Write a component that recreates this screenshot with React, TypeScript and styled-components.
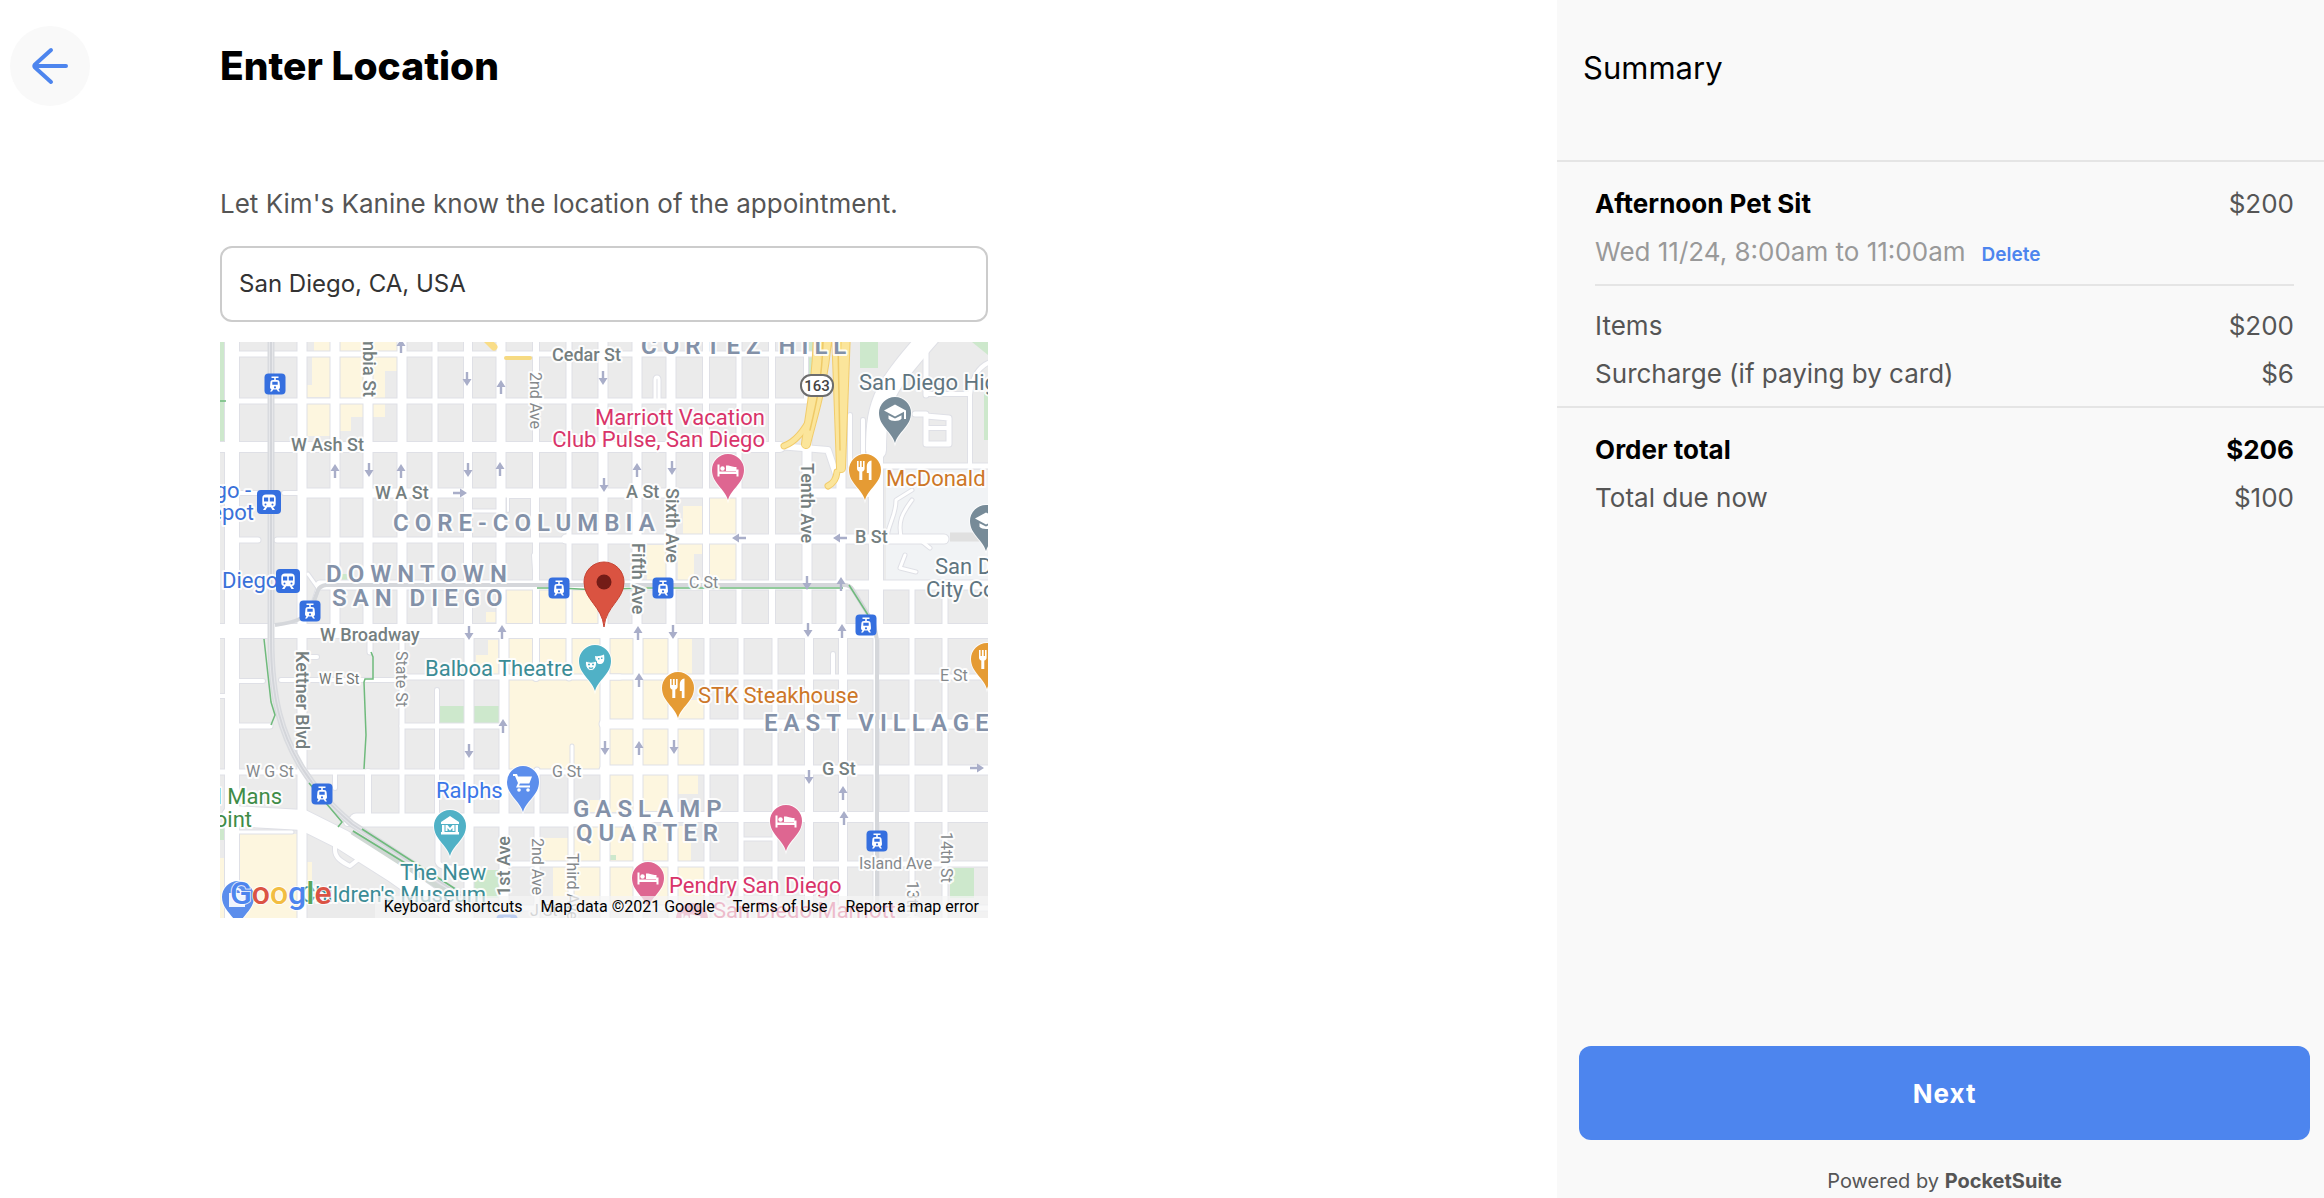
import React from "react";
import styled, { createGlobalStyle } from "styled-components";

const BLUE = "#4d85ee";
const MAP_FONT = 'Roboto, "Liberation Sans", sans-serif';

const GlobalStyle = createGlobalStyle`
  *, *::before, *::after { box-sizing: border-box; }
  body {
    margin: 0;
    background: #fff;
    font-family: Inter, "Liberation Sans", sans-serif;
    color: #555;
  }
  h1, h2, p { margin: 0; }
`;

const Page = styled.div`
  display: flex;
  min-height: 100vh;
`;

const Main = styled.main`
  flex: 1;
  min-width: 0;
  display: flex;
  align-items: flex-start;
  padding: 26px 10px;
`;

const BackButton = styled.button`
  flex: none;
  display: grid;
  place-items: center;
  width: 80px;
  height: 80px;
  border: 0;
  border-radius: 50%;
  padding: 0;
  background: #f9f9f9;
  cursor: pointer;
`;

const Content = styled.div`
  flex: 1;
  min-width: 0;
  max-width: 768px;
  margin-left: 130px;
`;

const Title = styled.h1`
  font-size: 39px;
  line-height: 80px;
  font-weight: 800;
  color: #000;
`;

const FieldLabel = styled.label`
  display: block;
  margin-top: 74px;
  font-size: 26px;
  line-height: 48px;
`;

const LocationInput = styled.input`
  display: block;
  width: 100%;
  height: 76px;
  margin-top: 18px;
  padding: 0 17px 2px;
  border: 2px solid #ccc;
  border-radius: 12px;
  background: #fff;
  font: inherit;
  font-size: 24px;
  color: #333;
`;

const MapFrame = styled.div`
  position: relative;
  margin-top: 20px;
  overflow: hidden;
`;

const MapDrawing = styled.svg`
  display: block;
  width: 100%;
  height: auto;
  font-family: ${MAP_FONT};
`;

const MapFooter = styled.div`
  position: absolute;
  right: 0;
  bottom: 0;
  display: flex;
  gap: 18px;
  padding: 0 9px;
  background: rgba(245, 245, 245, 0.7);
  font-family: ${MAP_FONT};
  font-size: 16px;
  line-height: 22px;
  color: #000;
  white-space: nowrap;
`;

const MapFooterButton = styled.button`
  padding: 0;
  border: 0;
  background: none;
  font: inherit;
  color: inherit;
  cursor: pointer;
`;

const MapFooterLink = styled.a`
  color: inherit;
  text-decoration: none;
`;

const Sidebar = styled.aside`
  flex: none;
  width: 33%;
  display: flex;
  flex-direction: column;
  background: #f9f9f9;
`;

const SidebarHeader = styled.header`
  padding: 38px 26px 62px;
  border-bottom: 2px solid #e5e5e5;
`;

const SidebarTitle = styled.h2`
  font-size: 31px;
  line-height: 60px;
  font-weight: 400;
  color: #000;
`;

const Section = styled.section<{ $ruled?: boolean }>`
  padding: 18px 30px 8px 38px;
  border-bottom: ${(p) => (p.$ruled ? "2px solid #e5e5e5" : "0")};
`;

const Item = styled.div`
  padding-bottom: 8px;
  margin-bottom: 16px;
  border-bottom: 2px solid #e5e5e5;
`;

const Row = styled.div<{ $strong?: boolean }>`
  display: flex;
  justify-content: space-between;
  font-size: 26px;
  line-height: 48px;
  font-weight: ${(p) => (p.$strong ? 700 : 400)};
  color: ${(p) => (p.$strong ? "#000" : "#555")};
`;

const ItemName = styled.span`
  font-weight: 700;
  color: #000;
`;

const ItemTime = styled.div`
  display: flex;
  align-items: baseline;
  gap: 16px;
  font-size: 26px;
  line-height: 48px;
  color: #999;
`;

const DeleteButton = styled.button`
  padding: 0;
  border: 0;
  background: none;
  font: inherit;
  font-size: 19px;
  line-height: 24px;
  font-weight: 600;
  color: ${BLUE};
  cursor: pointer;
`;

const SidebarFooter = styled.footer`
  margin-top: auto;
  padding: 0 14px 0 22px;
  text-align: center;
`;

const NextButton = styled.button`
  display: block;
  width: 100%;
  height: 94px;
  border: 0;
  border-radius: 12px;
  background: ${BLUE};
  font: inherit;
  font-size: 26px;
  font-weight: 700;
  letter-spacing: 1px;
  color: #fff;
  cursor: pointer;
`;

const PoweredBy = styled.p`
  padding-top: 24px;
  font-size: 20px;
  line-height: 34px;
`;

/* ---------- map data: [position, width, from, to] ---------- */

type Street = [number, number, number, number];

const avenues: Street[] = [
  [232, 14, 330, 930], [302, 9, 330, 930], [335, 9, 330, 632], [335, 4, 772, 788],
  [368, 9, 330, 632], [370, 5, 632, 652], [368, 6, 772, 818], [402, 9, 330, 632],
  [402, 5, 632, 818], [435, 5, 330, 632], [437, 4, 690, 818], [468, 8, 330, 632],
  [469, 9, 632, 930], [501, 9, 330, 632], [504, 9, 632, 930], [536, 6, 330, 678],
  [537, 5, 770, 930], [569, 5, 330, 678], [572, 3, 746, 770], [571, 5, 770, 930],
  [603, 9, 330, 632], [605, 9, 632, 930], [637, 9, 330, 632], [638, 9, 632, 930],
  [671, 9, 330, 632], [673, 9, 632, 930], [706, 6, 330, 632], [707, 5, 632, 930],
  [739, 5, 330, 632], [741, 5, 632, 930], [772, 6, 330, 632], [775, 5, 632, 930],
  [807, 9, 440, 632], [809, 8, 632, 930], [841, 9, 470, 632], [843, 8, 632, 930],
  [876, 14, 440, 630], [876, 5, 630, 930], [912, 5, 584, 930], [945, 5, 584, 930],
  [833, 4, 654, 676], [850, 4, 415, 466], [863, 4, 420, 466],
];

const crossStreets: Street[] = [
  [354, 5, 232, 812], [401, 5, 232, 806], [447, 10, 210, 780], [493, 9, 302, 866],
  [493, 4, 236, 260], [493, 4, 284, 302], [540, 5, 236, 258], [540, 5, 277, 570],
  [539, 9, 566, 944], [585, 9, 320, 1000], [631, 14, 210, 1000], [681, 4, 236, 263],
  [680, 4, 281, 402], [677, 5, 402, 504], [677, 5, 504, 620], [677, 5, 604, 1000],
  [726, 5, 402, 504], [724, 9, 604, 1000], [726, 5, 236, 270], [772, 5, 210, 604],
  [770, 9, 604, 1000], [820, 13, 356, 640], [817, 10, 630, 1000], [864, 5, 504, 1000],
  [908, 5, 504, 1000], [466, 5, 876, 1000], [832, 3, 236, 292], [657, 4, 302, 317],
  [839, 3, 741, 775], [696, 4, 210, 232],
];

const yellowBlocks: number[][] = [
  [314, 342, 16, 10], [340, 342, 57, 10], [312, 357, 18, 28], [307, 385, 23, 12],
  [340, 357, 45, 42], [340, 357, 57, 14], [306, 404, 24, 32], [340, 404, 23, 13],
  [340, 404, 11, 27], [373, 404, 12, 13], [507, 590, 26, 36], [539, 587, 29, 40],
  [573, 587, 30, 40], [647, 545, 20, 36], [678, 544, 16, 36], [694, 544, 9, 10],
  [683, 506, 20, 30], [709, 496, 28, 40], [709, 544, 28, 36], [476, 655, 22, 20],
  [509, 638, 94, 132], [610, 638, 24, 38], [643, 638, 25, 38], [678, 638, 14, 38],
  [610, 680, 24, 40], [643, 680, 25, 40], [678, 700, 26, 20], [610, 728, 24, 38],
  [643, 728, 25, 38], [678, 728, 26, 38], [610, 774, 24, 38], [643, 774, 25, 38],
  [678, 774, 20, 20], [541, 838, 27, 24], [574, 826, 28, 36], [609, 826, 26, 36],
  [643, 826, 26, 36], [678, 826, 13, 36], [553, 867, 50, 40], [609, 867, 26, 40],
  [643, 867, 26, 40], [678, 867, 26, 40], [239, 834, 59, 90], [220, 858, 6, 60],
  [303, 862, 9, 36], [590, 800, 12, 12], [488, 640, 10, 16], [486, 612, 11, 10],
];

const parks: number[][] = [
  [220, 342, 6, 100], [809, 342, 14, 32], [860, 342, 18, 26], [984, 392, 6, 48],
  [440, 706, 60, 17], [220, 828, 6, 12], [472, 870, 27, 28], [950, 868, 24, 30],
  [342, 574, 5, 6], [609, 855, 7, 5],
];

const arrows: [number, number, number][] = [
  [401, 346, 0], [467, 379, 180], [335, 471, 0], [369, 470, 180], [401, 471, 0],
  [468, 470, 180], [460, 493, 90], [501, 387, 0], [603, 378, 180], [500, 469, 0],
  [604, 485, 180], [637, 470, 0], [672, 468, 180], [739, 538, 270], [840, 538, 270],
  [807, 583, 180], [841, 584, 0], [469, 633, 180], [469, 751, 180], [502, 632, 0],
  [638, 633, 0], [673, 632, 180], [639, 680, 0], [503, 726, 0], [605, 748, 180],
  [639, 748, 0], [674, 747, 180], [808, 630, 180], [842, 631, 0], [977, 768, 90],
  [809, 777, 180], [843, 793, 0], [844, 818, 0],
];

type LabelKind = "street" | "minor" | "district" | "poi";
interface LabelSpec {
  t: string; x: number; y: number; kind: LabelKind;
  color?: string; r?: number; end?: boolean; size?: number;
}

const PINK = "#d9346a";
const TEAL = "#3b8c96";
const ORANGE = "#cd7728";
const SLATE = "#607580";
const TRANSIT = "#3a71d9";

const labels: LabelSpec[] = [
  { t: "W Ash St", x: 291, y: 451, kind: "street" },
  { t: "W A St", x: 375, y: 499, kind: "street" },
  { t: "Cedar St", x: 552, y: 361, kind: "street" },
  { t: "A St", x: 626, y: 498, kind: "street" },
  { t: "B St", x: 855, y: 543, kind: "street" },
  { t: "W Broadway", x: 320, y: 641, kind: "street" },
  { t: "G St", x: 822, y: 775, kind: "street" },
  { t: "mbia St", x: 363, y: 397, kind: "street", r: 90, end: true },
  { t: "Sixth Ave", x: 666, y: 488, kind: "street", r: 90 },
  { t: "Fifth Ave", x: 632, y: 543, kind: "street", r: 90 },
  { t: "Tenth Ave", x: 801, y: 463, kind: "street", r: 90 },
  { t: "Kettner Blvd", x: 296, y: 651, kind: "street", r: 90 },
  { t: "1st Ave", x: 510, y: 896, kind: "street", r: -90 },
  { t: "C St", x: 689, y: 588, kind: "minor" },
  { t: "W E St", x: 319, y: 684, kind: "minor", size: 14, color: "#6f7472" },
  { t: "W G St", x: 246, y: 777, kind: "minor" },
  { t: "G St", x: 552, y: 777, kind: "minor" },
  { t: "E St", x: 940, y: 681, kind: "minor" },
  { t: "Island Ave", x: 859, y: 869, kind: "minor" },
  { t: "J St", x: 530, y: 916, kind: "minor" },
  { t: "2nd Ave", x: 530, y: 372, kind: "minor", r: 90 },
  { t: "State St", x: 396, y: 651, kind: "minor", r: 90 },
  { t: "2nd Ave", x: 532, y: 838, kind: "minor", r: 90 },
  { t: "Third Ave", x: 567, y: 853, kind: "minor", r: 90 },
  { t: "14th St", x: 941, y: 832, kind: "minor", r: 90 },
  { t: "13th St", x: 907, y: 881, kind: "minor", r: 90 },
  { t: "CORTEZ HILL", x: 641, y: 354, kind: "district" },
  { t: "CORE-COLUMBIA", x: 393, y: 531, kind: "district" },
  { t: "DOWNTOWN", x: 326, y: 582, kind: "district" },
  { t: "SAN DIEGO", x: 332, y: 606, kind: "district" },
  { t: "GASLAMP", x: 573, y: 817, kind: "district" },
  { t: "QUARTER", x: 576, y: 841, kind: "district" },
  { t: "EAST VILLAGE", x: 764, y: 731, kind: "district" },
  { t: "Marriott Vacation", x: 765, y: 425, kind: "poi", color: PINK, end: true },
  { t: "Club Pulse, San Diego", x: 765, y: 447, kind: "poi", color: PINK, end: true },
  { t: "Diego", x: 222, y: 588, kind: "poi", color: TRANSIT },
  { t: "go -", x: 251, y: 498, kind: "poi", color: TRANSIT, end: true },
  { t: "epot", x: 254, y: 520, kind: "poi", color: TRANSIT, end: true },
  { t: "San Diego Hig", x: 859, y: 390, kind: "poi", color: SLATE },
  { t: "McDonald", x: 886, y: 486, kind: "poi", color: ORANGE },
  { t: "San D", x: 935, y: 574, kind: "poi", color: SLATE },
  { t: "City Co", x: 926, y: 597, kind: "poi", color: SLATE },
  { t: "Balboa Theatre", x: 425, y: 676, kind: "poi", color: TEAL },
  { t: "STK Steakhouse", x: 698, y: 703, kind: "poi", color: ORANGE },
  { t: "Ralphs", x: 436, y: 798, kind: "poi", color: "#3a76e8" },
  { t: "l Mans", x: 282, y: 804, kind: "poi", color: "#3f8c47", end: true },
  { t: "oint", x: 252, y: 827, kind: "poi", color: "#3f8c47", end: true },
  { t: "The New", x: 400, y: 880, kind: "poi", color: TEAL },
  { t: "Children's Museum", x: 486, y: 902, kind: "poi", color: TEAL, end: true },
  { t: "Pendry San Diego", x: 669, y: 893, kind: "poi", color: PINK },
  { t: "San Diego Marriott", x: 713, y: 918, kind: "poi", color: PINK },
];

const labelStyle: Record<LabelKind, { size: number; weight: number; color: string; spacing: number }> = {
  street: { size: 18, weight: 500, color: "#757f80", spacing: 0 },
  minor: { size: 16, weight: 400, color: "#85898c", spacing: 0 },
  district: { size: 24, weight: 600, color: "#8391a8", spacing: 6 },
  poi: { size: 22, weight: 400, color: "#333", spacing: 0 },
};

function MapLabel({ t, x, y, kind, color, r, end, size }: LabelSpec) {
  const s = labelStyle[kind];
  return (
    <text
      transform={`translate(${x} ${y}) rotate(${r ?? 0})`}
      fontSize={size ?? s.size}
      fontWeight={s.weight}
      letterSpacing={s.spacing}
      fill={color ?? s.color}
      textAnchor={end ? "end" : "start"}
      stroke="#fff"
      strokeWidth={4}
      strokeLinejoin="round"
      strokeOpacity={0.9}
      paintOrder="stroke"
    >
      {t}
    </text>
  );
}

/* Glyphs are drawn round the centre of the pin head. */
const glyphs: Record<string, React.ReactNode> = {
  bed: (
    <g fill="#fff">
      <path d="M-10.500-5.500h2v7h16.500v-2h2.500v7h-2v-2.500h-17v2.500h-2z" />
      <circle cx="-5.500" cy="-1.500" r="2.200" />
      <path d="M-2-4.500c4-.5 5 1.500 10.500 1.500v4H-2z" />
    </g>
  ),
  fork: (
    <g fill="#fff">
      <path d="M-8-9h1.600v6h1.300v-6h1.800v6h1.300v-6H-.4v7.500c0 1.800-1 2.700-2.300 3V10h-3V1.500c-1.300-.3-2.300-1.200-2.300-3z" />
      <path d="M6.500-9.500V10H3.800V3H1.800v-7c0-3 2-5.200 4.700-5.500z" />
    </g>
  ),
  school: (
    <g fill="#fff">
      <path d="M0-8.500 11-2.500V6H9V-1.300L0 3.500-11-2.500z" />
      <path d="M-6.500 2.200 0 5.600 6.500 2.200v3.600C4 8.800-4 8.800-6.500 5.800z" />
    </g>
  ),
  masks: (
    <g>
      <path fill="#fff" d="M0-5c3 .5 6 0 9-1.500.8 5 .5 9-3.500 9.500C2 3.500.5 0 0-5z" />
      <path fill="#fff" stroke="#50b1c6" d="M-9.500 0c4 1.500 7 1.500 11 0C2 6-.5 9.500-4 9.500S-10 6-9.500 0z" />
      <path stroke="#50b1c6" strokeWidth="1.400" fill="none" d="M-7 3.500h2M-3 3.500h2M-6 6.500c1 1.200 3 1.200 4 0M3-2.200h1.500M6-2.800h1.500" />
    </g>
  ),
  cart: (
    <g fill="#fff">
      <path d="M-10-8h4l1 2.500H9L6.300 1.500H-3L-4 3.500H7v2H-7L-5 1-8-6h-2z" />
      <circle cx="-4" cy="8" r="1.800" />
      <circle cx="5" cy="8" r="1.800" />
    </g>
  ),
  museum: (
    <path fill="#fff" d="M0-10 9-4v2H-9v-2zM-8-1h2.500v7H-8zM5.500-1H8v7H5.500zM-9 6H9v2.500H-9zM-4.500 5v-6h2L0 2l2.500-3h2v6h-2V2L0 4.800-2.500 2v3z" />
  ),
  bag: <path fill="#fff" fillOpacity="0.9" d="M-9-4h3c0-7 10-7 10 0h3V10H-9zM-4-4h6c0-4-6-4-6 0z" />,
};

function Pin({ x, y, color, glyph }: { x: number; y: number; color: string; glyph: string }) {
  return (
    <g transform={`translate(${x} ${y})`}>
      <path
        d="M0 0C-3-11-16-17-16-30a16 16 0 0 1 32 0C16-17 3-11 0 0z"
        fill={color}
        stroke="#fff"
        strokeWidth="2"
        strokeOpacity="0.7"
        paintOrder="stroke"
      />
      <g transform="translate(0 -30)">{glyphs[glyph]}</g>
    </g>
  );
}

const pins: [number, number, string, string][] = [
  [728, 500, "#de6691", "bed"],
  [865, 500, "#e59b34", "fork"],
  [895, 443, "#778b98", "school"],
  [986, 551, "#778b98", "school"],
  [595, 691, "#50b1c6", "masks"],
  [678, 718, "#e59b34", "fork"],
  [987, 689, "#e59b34", "fork"],
  [523, 812, "#5c8eec", "cart"],
  [450, 856, "#50b1c6", "museum"],
  [648, 908, "#de6691", "bed"],
  [786, 851, "#de6691", "bed"],
  [692, 949, "#de6691", "bed"],
  [238, 927, "#5c8eec", "bag"],
];

function TramStop({ x, y }: { x: number; y: number }) {
  return (
    <g transform={`translate(${x} ${y})`}>
      <rect x="-10.500" y="-10.500" width="21" height="21" rx="4" fill="#356fdf" />
      <path
        fill="#fff"
        fillRule="evenodd"
        d="M-3.500-7.500h7V-6H.8v2H2c1.600 0 2.400.8 2.600 2.400L5 3c0 1.300-.6 2-1.500 2.200L5 7.500H3L1.800 5.500h-3.600L-3 7.500h-2l1.500-2.300C-4.400 5-5 4.300-5 3l.4-4.600C-4.400-3.200-3.600-4-2-4h1.200v-2h-2.700zM-2.700-2.200V.8h5.400v-3zM0 2.200a1.100 1.100 0 1 0 0 2.200 1.100 1.100 0 1 0 0-2.200z"
      />
    </g>
  );
}

function TrainStation({ x, y }: { x: number; y: number }) {
  return (
    <g transform={`translate(${x} ${y})`}>
      <rect x="-12" y="-12" width="24" height="24" rx="4" fill="#356fdf" />
      <path
        fill="#fff"
        fillRule="evenodd"
        d="M-3-7.500h6c2.500 0 3.700 1.200 3.700 3.500v6C6.700 4 5.500 5 4 5l2 3H3.500L1.800 5.300h-3.600L-3.500 8H-6l2-3C-5.500 5-6.700 4-6.700 2v-6c0-2.300 1.200-3.500 3.700-3.500zM-5-4.500v4h4.200v-4zM.8-4.500v4H5v-4zM-3.500 1.500a1 1 0 1 0 0 2 1 1 0 1 0 0-2zM3.500 1.500a1 1 0 1 0 0 2 1 1 0 1 0 0-2z"
      />
    </g>
  );
}

const tramStops: [number, number][] = [
  [275, 384], [310, 611], [559, 588], [663, 588], [866, 625], [322, 794], [877, 841], [507, 925],
];

/* Streets that do not follow the grid. */
const freeStreets: [string, number][] = [
  ["M876 450C876 400 884 388 935 330", 20],
  ["M806 330V398", 4],
  ["M232 816 303 820 343 840 395 873 450 912 470 930", 20],
  ["M348 822 366 818", 8],
  ["M335 842V850C335 858 342 862 350 866L360 858", 4],
  ["M778 446 828 450 838 480", 6],
  ["M438 818V862C440 870 460 868 469 868", 5],
  ["M308 574 318 588 312 606", 3],
  ["M926 342V395M926 416 949 418V444L926 444V414L915 414", 5],
  ["M970 395V466M970 395C972 375 980 366 990 362M928 394H970M928 428H949", 4],
  ["M887 536C890 520 896 515 896 500L912 490M902 540C896 520 905 510 912 500", 3],
  ["M655 400V380C655 376 659 376 659 380V400", 3],
  ["M532 497H508V511M532 497V540M536 540V550L533 555 535 585", 2],
  ["M905 555 900 568 916 572M920 540 930 548M470 511H497", 3],
];

const railPath = "M271 330V640C271 700 282 735 302 768C316 790 330 805 352 824L480 908";
const tramPath = "M275 625C300 622 308 616 312 606L318 590Q320 586 326 585H844Q850 585 853 590L874 624 877 640V930";

function CityMap() {
  return (
    <MapDrawing viewBox="220 342 768 576" role="img" aria-label="Map of downtown San Diego">
      <rect x="220" y="342" width="768" height="576" fill="#ebebeb" />
      <rect x="886" y="470" width="102" height="112" fill="#f1f3f5" />
      {yellowBlocks.map(([x, y, w, h], i) => (
        <rect key={i} x={x} y={y} width={w} height={h} fill="#fdf6df" />
      ))}
      {parks.map(([x, y, w, h], i) => (
        <rect key={i} x={x} y={y} width={w} height={h} fill="#cde8cc" />
      ))}
      <path d="M972 342H988V355z" fill="#cde8cc" />

      {[true, false].map((casing) => (
        <g key={String(casing)} stroke={casing ? "#dfe0e6" : "#fff"} fill="none" strokeLinecap="round" strokeLinejoin="round">
          {avenues.map(([x, w, a, b], i) => (
            <path key={i} d={`M${x} ${a}V${b}`} strokeWidth={casing ? w + 2 : w} />
          ))}
          {crossStreets.map(([y, w, a, b], i) => (
            <path key={i} d={`M${a} ${y}H${b}`} strokeWidth={casing ? w + 2 : w} />
          ))}
          {freeStreets.map(([d, w], i) => (
            <path key={i} d={d} strokeWidth={casing ? w + 2 : w} />
          ))}
        </g>
      ))}
      <path d="M950 537H988" stroke="#e0e0e0" strokeWidth="9" />

      <g fill="none">
        <path d={railPath} stroke="#d9dbdf" strokeWidth="7" />
        <path d={railPath} stroke="#e6e7ea" strokeWidth="4" />
        <path d={railPath} stroke="#d3d5da" strokeWidth="2" />
        <path d={tramPath} stroke="#d5d7db" strokeWidth="4" />
        <path d="M352 832 440 888 480 908" stroke="#d0d8d4" strokeWidth="5" />
        <g stroke="#6fba7c" strokeWidth="1.500">
          <path d="M264 639 271 702 275 715 271 725M371 652 373 657V679H365L364 682 366 735 364 769" />
          <path d="M309 783 342 822 338 827M362 829 457 890M353 831 410 866" />
          <path d="M537 588H560L598 590M610 589 645 588H843M849 585 868 615M220 401H226" />
        </g>
      </g>

      <g fill="none" strokeLinecap="round" strokeLinejoin="round">
        <path d="M818 330C817 380 812 400 806 444M828 330C824 385 813 415 806 444M836 330 841 468M846 330 841 468" stroke="#f2cc6b" strokeWidth="10" />
        <path d="M812 415Q800 440 784 446M837 472Q836 482 828 486" stroke="#f2cc6b" strokeWidth="7" />
        <path d="M818 330C817 380 812 400 806 444M828 330C824 385 813 415 806 444M836 330 841 468M846 330 841 468" stroke="#fbe59b" strokeWidth="8" />
        <path d="M812 415Q800 440 784 446M837 472Q836 482 828 486" stroke="#fbe59b" strokeWidth="5" />
        <path d="M823 342C822 380 816 405 810 430M838 342 840 450" stroke="#efca68" strokeWidth="1.500" />
        <path d="M506 358H530" stroke="#f6da82" strokeWidth="4" />
        <path d="M487 340 494 347" stroke="#f9dd88" strokeWidth="7" />
      </g>

      <g fill="#a9aec9">
        {arrows.map(([x, y, r], i) => (
          <path key={i} transform={`translate(${x} ${y}) rotate(${r})`} d="M0-7 4.500 0H1.200V7H-1.200V0H-4.500z" />
        ))}
      </g>

      {labels.map((l, i) => (
        <MapLabel key={i} {...l} />
      ))}

      <rect x="801" y="375" width="32" height="21" rx="10" fill="#fff" stroke="#6d6d6d" strokeWidth="2" />
      <text x="817" y="391" textAnchor="middle" fontSize="15" fontWeight="500" fill="#444">163</text>

      <TrainStation x={269} y={502} />
      <TrainStation x={288} y={581} />
      {tramStops.map(([x, y]) => (
        <TramStop key={`${x}-${y}`} x={x} y={y} />
      ))}
      {pins.map(([x, y, color, glyph]) => (
        <Pin key={`${x}-${y}`} x={x} y={y} color={color} glyph={glyph} />
      ))}

      <path d="M604 627C602 606 584 600 584 582a20 20 0 0 1 40 0C624 600 606 606 604 627z" fill="#da5341" stroke="#c64434" />
      <circle cx="604" cy="582" r="7.500" fill="#741c17" />

      <text x="230" y="904" fontSize="32" fontWeight="500" stroke="#fff" strokeWidth="2" strokeOpacity="0.8" paintOrder="stroke">
        <tspan fill="#4d85ee">G</tspan>
        <tspan fill="#db5344">o</tspan>
        <tspan fill="#f2bd42">o</tspan>
        <tspan fill="#4d85ee">g</tspan>
        <tspan fill="#58a65c">l</tspan>
        <tspan fill="#db5344">e</tspan>
      </text>
    </MapDrawing>
  );
}

export default function App() {
  return (
    <>
      <GlobalStyle />
      <Page>
        <Main>
          <BackButton type="button" aria-label="Back">
            <svg width="40" height="40" viewBox="0 0 40 40" fill="none" stroke={BLUE} strokeWidth="4" strokeLinecap="round" strokeLinejoin="round">
              <path d="M36 20H5M21 4 5 18.500Q3.500 20 5 21.500L21 36" />
            </svg>
          </BackButton>
          <Content>
            <Title>Enter Location</Title>
            <FieldLabel htmlFor="location">Let Kim's Kanine know the location of the appointment.</FieldLabel>
            <LocationInput id="location" type="text" defaultValue="San Diego, CA, USA" />
            <MapFrame>
              <CityMap />
              <MapFooter>
                <MapFooterButton type="button">Keyboard shortcuts</MapFooterButton>
                <span>Map data ©2021 Google</span>
                <MapFooterLink href="#terms">Terms of Use</MapFooterLink>
                <MapFooterLink href="#report">Report a map error</MapFooterLink>
              </MapFooter>
            </MapFrame>
          </Content>
        </Main>
        <Sidebar>
          <SidebarHeader>
            <SidebarTitle>Summary</SidebarTitle>
          </SidebarHeader>
          <Section $ruled>
            <Item>
              <Row>
                <ItemName>Afternoon Pet Sit</ItemName>
                <span>$200</span>
              </Row>
              <ItemTime>
                <span>Wed 11/24, 8:00am to 11:00am</span>
                <DeleteButton type="button">Delete</DeleteButton>
              </ItemTime>
            </Item>
            <Row>
              <span>Items</span>
              <span>$200</span>
            </Row>
            <Row>
              <span>Surcharge (if paying by card)</span>
              <span>$6</span>
            </Row>
          </Section>
          <Section>
            <Row $strong>
              <span>Order total</span>
              <span>$206</span>
            </Row>
            <Row>
              <span>Total due now</span>
              <span>$100</span>
            </Row>
          </Section>
          <SidebarFooter>
            <NextButton type="button">Next</NextButton>
            <PoweredBy>
              Powered by <strong>PocketSuite</strong>
            </PoweredBy>
          </SidebarFooter>
        </Sidebar>
      </Page>
    </>
  );
}
